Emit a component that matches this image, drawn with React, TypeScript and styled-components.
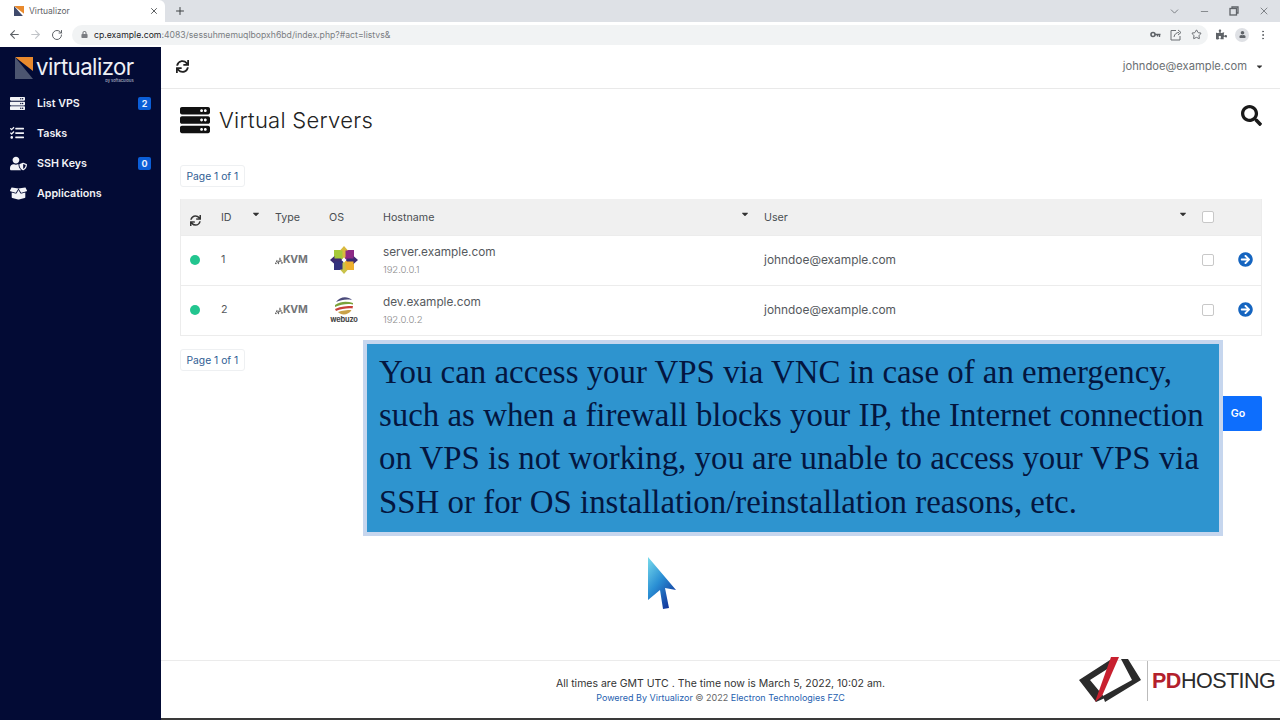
import React from "react";
import styled, { createGlobalStyle } from "styled-components";
import { FaSync, FaServer, FaSearch, FaTasks, FaUserShield, FaBoxOpen, FaArrowCircleRight, FaCaretDown, FaPuzzlePiece, FaLock, FaUser } from "react-icons/fa";
import { ArrowLeft, ArrowRight, RotateCw, Plus, X, ChevronDown, Minus, Star, EllipsisVertical } from "lucide-react";

const Global = createGlobalStyle`
  html, body { margin: 0; padding: 0; height: 720px; overflow: hidden; background: #fff; }
  body { font-family: "Inter", "Liberation Sans", sans-serif; }
  * { box-sizing: border-box; }
  #root { height: 720px; }
`;

const Page = styled.div`
  position: relative; width: 1280px; height: 720px; display: flex; flex-direction: column; overflow: hidden;
`;
const TabStrip = styled.div`
  height: 22px; background: #dee1e6; display: flex; align-items: flex-end; color: #3c4043; flex: none;
`;
const Tab = styled.div`
  width: 165px; height: 22px; background: #fff; border-radius: 0 6px 0 0; display: flex; align-items: center; padding: 0 6px 0 14px; gap: 5px;
`;
const TabTitle = styled.span`
  flex: 1; font: 400 8.5px "Inter", sans-serif; color: #5f6368;
`;
const NewTab = styled.div`
  width: 30px; height: 22px; display: flex; align-items: center; justify-content: center;
`;
const WindowControls = styled.div`
  margin-left: auto; height: 22px; display: flex; align-items: center; color: #5f6368; padding-right: 1px;
`;
const WinBtn = styled.div`
  width: 30px; height: 18px; display: flex; align-items: center; justify-content: center;
`;
const Toolbar = styled.div`
  height: 25px; background: #fff; flex: none; display: flex; align-items: center; padding: 0 0 0 4px; color: #5f6368;
`;
const NavBtn = styled.div<{ $faded?: boolean }>`
  width: 21px; display: flex; justify-content: center; color: ${p => (p.$faded ? "#c2c5c9" : "#5f6368")};
`;
const Omnibox = styled.div`
  margin-left: 5px; width: 1136px; height: 20px; background: #f1f3f4; border-radius: 10px; display: flex; align-items: center; padding: 0 6px 0 9px; gap: 6px; font: 400 8.67px "Inter", sans-serif; color: #7a7d82;
`;
const Domain = styled.span` color: #202124; `;
const UrlIcons = styled.div`
  margin-left: auto; display: flex; align-items: center; gap: 9px; color: #5f6368;
`;
const ToolIcons = styled.div`
  margin-left: 8px; display: flex; align-items: center; gap: 8px;
`;
const Avatar = styled.div`
  width: 14px; height: 14px; border-radius: 50%; background: #dfe1e5; display: flex; align-items: center; justify-content: center; color: #5f6368;
`;
const Body = styled.div`
  flex: 1; display: flex; min-height: 0;
`;
const Sidebar = styled.aside`
  width: 161px; background: #030b35; flex: none; color: #fff;
`;
const Brand = styled.div`
  height: 41px; display: flex; align-items: flex-start; padding: 9px 0 0 15px; gap: 3px;
`;
const BrandText = styled.div`
  display: flex; flex-direction: column; align-items: flex-end;
`;
const BrandName = styled.span`
  font: 400 22.2px/21px "Inter", sans-serif; letter-spacing: -0.55px; color: #eef0f5;
`;
const BrandBy = styled.span`
  font: 600 4px/5px "Inter", sans-serif; color: #9aa0b5; margin-top: 1px;
`;
const Menu = styled.nav`
  display: flex; flex-direction: column;
`;
const MenuItem = styled.div`
  height: 30px; display: flex; align-items: center; padding: 0 10px; font: 600 10.7px "Inter", sans-serif; color: #f2f3f7;
`;
const MenuIcon = styled.span`
  width: 27px; display: flex; align-items: center;
`;
const MenuBadge = styled.span`
  margin-left: auto; width: 13px; height: 13px; border-radius: 2px; background: #0b5ed7; font: 700 9px/13px "Inter", sans-serif; text-align: center; color: #e8f0ff;
`;
const Main = styled.main`
  flex: 1; display: flex; flex-direction: column; min-width: 0; border-bottom: 2px solid #3a3a3a;
`;
const TopBar = styled.header`
  height: 42px; flex: none; border-bottom: 1px solid #e9e9e9; display: flex; align-items: center; padding: 0 16px 3px 15px;
`;
const UserMenu = styled.div`
  margin-left: auto; display: flex; align-items: center; gap: 8px; font: 400 11.2px "Inter", sans-serif; color: #6b6f73;
`;
const Content = styled.div`
  flex: 1; padding: 0 18px 0 19px; display: flex; flex-direction: column;
`;
const TitleRow = styled.div`
  height: 63px; flex: none; display: flex; align-items: center; gap: 9px; color: #111; padding-bottom: 2px;
`;
const PageTitle = styled.h1`
  margin: 0; font: 300 22px "Inter", sans-serif; letter-spacing: 0.28px; color: #222;
`;
const SearchIcon = styled.span`
  margin-left: auto; display: flex; color: #1a1a1a; margin-bottom: 8px;
`;
const Pager = styled.div`
  align-self: flex-start; height: 22px; padding: 0 5.5px; border: 1px solid #eef0f2; border-radius: 3px; font: 400 10.3px/20px "Inter", sans-serif; color: #2f5d94; background: #fff;
`;
const PagerTop = styled(Pager)`
  margin-top: 13px;
`;
const Table = styled.div`
  margin-top: 12px; border: solid #ececec; border-width: 0 1px 1px 1px;
`;
const Cols = "40px 54px 54px 54px 381px 438px 36px 1fr";
const HeadRow = styled.div`
  display: grid; grid-template-columns: ${Cols}; height: 36px; background: #f0f0f0; align-items: center; font: 400 10.7px "Inter", sans-serif; color: #4a4e52;
`;
const Row = styled.div`
  display: grid; grid-template-columns: ${Cols}; height: 50px; padding-bottom: 2px; align-items: center; border-top: 1px solid #ececec; font: 400 10.7px "Inter", sans-serif; color: #55595d;
`;
const HeadCell = styled.div`
  display: flex; align-items: center; justify-content: space-between; padding-right: 14px;
`;
const SortCaret = styled.span`
  display: flex; color: #333; margin-top: -7px;
`;
const IconCell = styled.div`
  padding-left: 9px; display: flex; align-items: center; color: #333;
`;
const HeadSync = styled(IconCell)`
  padding-top: 7px;
`;
const StatusDot = styled.span`
  width: 10px; height: 10px; border-radius: 50%; background: #22c58f;
`;
const Kvm = styled.div`
  display: flex; align-items: center; font: 700 10.5px "Inter", sans-serif; color: #727477; letter-spacing: -0.2px;
`;
const KvmGlyph = styled.svg`
  margin-top: 2px;
`;
const Host = styled.div`
  display: flex; flex-direction: column; gap: 5px; font-size: 11.8px; line-height: 13px; color: #55595d; padding-top: 2px;
`;
const Ip = styled.span`
  font: 300 9.6px/12px "Inter", sans-serif; color: #888; letter-spacing: -0.1px;
`;
const Email = styled.div`
  font-size: 11.9px; color: #55595d;
`;
const Check = styled.span`
  width: 12px; height: 12px; border: 1px solid #c8c8c8; border-radius: 2px; background: #fff; display: block;
`;
const Arrow = styled.div`
  display: flex; color: #1565c0;
`;
const OsBox = styled.div`
  width: 30px; display: flex; flex-direction: column; align-items: center;
`;
const WebuzoLabel = styled.span`
  font: 700 7.4px/8px "Inter", sans-serif; color: #444; letter-spacing: -0.2px;
`;
const PagerBottom = styled(Pager)`
  margin-top: 13px;
`;
const ActionRow = styled.div`
  display: flex; justify-content: flex-end; margin-top: 25px;
`;
const GoButton = styled.button`
  width: 48px; height: 35px; border: 0; border-radius: 2px; background: #0d6efd; color: #fff; font: 600 10.7px "Inter", sans-serif;
`;
const Footer = styled.footer`
  margin-top: auto; height: 58px; flex: none; border-top: 1px solid #ebebeb; display: flex; flex-direction: column; align-items: center; padding-top: 16px; gap: 1px;
`;
const FootLine = styled.div`
  font: 400 10.5px/14px "Inter", sans-serif; color: #333;
`;
const FootLinks = styled.div`
  font: 400 9px/11px "Inter", sans-serif; color: #666;
`;
const FootLink = styled.span` color: #1f5fb0; `;
const Caption = styled.div`
  position: absolute; left: 363px; top: 340px; width: 860px; height: 196px; background: #2e94cf; border: 4px solid #c6d6ee; padding: 7px 0 0 12px; font: 400 32.9px/43.2px "Liberation Serif", serif; color: #04163f; white-space: pre;
`;
const CursorMark = styled.svg`
  position: absolute; left: 646px; top: 555px;
`;
const PdLogo = styled.div`
  position: absolute; left: 1078px; top: 656px; display: flex; align-items: center;
`;
const PdDivider = styled.span`
  width: 1px; height: 40px; background: #bbb; margin: 0 4px 0 5px;
`;
const PdText = styled.span`
  font: 400 21.5px "Liberation Sans", sans-serif; letter-spacing: -0.5px; color: #2b2b2b;
`;
const PdRed = styled.b`
  color: #b3202c; font-weight: 700;
`;

const BrandMark = () => (
  <svg width="18" height="23" viewBox="0 0 18 23">
    <polygon points="0,1 18,1 18,15" fill="#e98a2d" />
    <polygon points="0,1 18,23 0,23" fill="#4c5570" />
  </svg>
);
const TabIcon = () => (
  <svg width="10" height="10" viewBox="0 0 18 18">
    <polygon points="0,0 18,0 18,14" fill="#e98a2d" />
    <polygon points="0,0 16,18 0,18" fill="#3f4a6b" />
  </svg>
);
const KeyIcon = () => (
  <svg width="11" height="7" viewBox="0 0 11 7" fill="none" stroke="#5f6368">
    <circle cx="3" cy="3.5" r="2" strokeWidth="1.6" />
    <path d="M5 3.5 H10.5 M9.5 3.5 V6 M7.5 3.5 V5.5" strokeWidth="1.3" />
  </svg>
);
const ShareIcon = () => (
  <svg width="12" height="12" viewBox="0 0 12 12" fill="none" stroke="#6b6f73" strokeWidth="1">
    <path d="M6 1.5 H1 V11 H10 V7" />
    <path d="M4 8 C4.5 5 6.5 3.5 9 3.5 M8 1 L11 3.5 L8 6" />
  </svg>
);
const KvmMark = () => (
  <KvmGlyph width="8" height="9" viewBox="0 0 8 9">
    <path d="M0.5 8 L2 5 L3.5 7 L5 3 L7.5 8" fill="none" stroke="#555" strokeWidth="1.4" strokeDasharray="1.5 .8" />
  </KvmGlyph>
);
const CentOs = () => (
  <svg width="28" height="28" viewBox="0 0 28 28">
    <rect x="4" y="4" width="9.5" height="9.5" fill="#a6c93a" />
    <rect x="14.5" y="4" width="9.5" height="9.5" fill="#8d2a86" />
    <rect x="4" y="14.5" width="9.5" height="9.5" fill="#33307e" />
    <rect x="14.5" y="14.5" width="9.5" height="9.5" fill="#eeb02e" />
    <path d="M14 0 L18 4.5 L15.5 4.5 L15.5 11 L14 12.5 L12.5 11 L12.5 4.5 L10 4.5Z" fill="#d9b93e" />
    <path d="M28 14 L23.5 18 L23.5 15.5 L17 15.5 L15.5 14 L17 12.5 L23.5 12.5 L23.5 10Z" fill="#3c2a72" />
    <path d="M14 28 L10 23.5 L12.5 23.5 L12.5 17 L14 15.5 L15.5 17 L15.5 23.5 L18 23.5Z" fill="#c9c24a" />
    <path d="M0 14 L4.5 10 L4.5 12.5 L11 12.5 L12.5 14 L11 15.5 L4.5 15.5 L4.5 18Z" fill="#3c2a72" />
    <path d="M14 11.5 L16.5 14 L14 16.5 L11.5 14Z" fill="#fff" />
  </svg>
);
const Webuzo = () => (
  <svg width="20" height="20" viewBox="0 0 20 20">
    <path d="M2 6 C6 0 14 0 18 4 C12 3 7 4 2 6Z" fill="#4a4a7a" />
    <path d="M1 9 C7 5 13 5 19 7 L19 8.5 C13 7.5 7 8.5 1 11Z" fill="#7aa23a" />
    <path d="M1 13 C7 10 13 10 19 10 L18.5 12.5 C13 12 7 13 2 15Z" fill="#c8413a" />
    <path d="M4 16 C8 14.5 13 14 17.5 14 C15 19 7 20 4 16Z" fill="#c9a24a" />
  </svg>
);

const Cursor = () => (
  <CursorMark width="32" height="58" viewBox="0 0 32 58">
    <defs>
      <linearGradient id="curs" x1="0" y1="0" x2="0.7" y2="1">
        <stop offset="0" stopColor="#7adcec" />
        <stop offset="0.5" stopColor="#2a8fd4" />
        <stop offset="1" stopColor="#12349a" />
      </linearGradient>
    </defs>
    <path d="M2 2 L2 45 L14 35 L17 54 L23 53 L19 33 L30 35 Z" fill="url(#curs)" />
  </CursorMark>
);

const PdMark = () => (
  <svg width="64" height="50" viewBox="0 0 64 50">
    <path d="M1 24 L32 4 L34 10 L12 24 L27 42 L18 46 Z" fill="#2b2b2b" />
    <path d="M43 3 L50 3 L63 24 L27 46 L25 40 L54 24 Z" fill="#2b2b2b" />
    <path d="M33 1 L41 1 L24 40 L17 46 Z" fill="#c8202f" />
  </svg>
);

function VpsRow({ id, host, ip, os }: { id: number; host: string; ip: string; os: React.ReactNode }) {
  return (
    <Row>
      <IconCell><StatusDot /></IconCell>
      <div>{id}</div>
      <Kvm><KvmMark />KVM</Kvm>
      <OsBox>{os}</OsBox>
      <Host>{host}<Ip>{ip}</Ip></Host>
      <Email>johndoe@example.com</Email>
      <Check />
      <Arrow><FaArrowCircleRight size={15} /></Arrow>
    </Row>
  );
}

export default function App() {
  return (
    <Page>
      <Global />
      <TabStrip>
        <Tab>
          <TabIcon />
          <TabTitle>Virtualizor</TabTitle>
          <X size={10} strokeWidth={2} />
        </Tab>
        <NewTab><Plus size={12} strokeWidth={2} /></NewTab>
        <WindowControls>
          <WinBtn><ChevronDown size={13} strokeWidth={1.4} /></WinBtn>
          <WinBtn><Minus size={11} strokeWidth={1.5} /></WinBtn>
          <WinBtn>
            <svg width="10" height="10" viewBox="0 0 10 10" fill="none" stroke="#5f6368" strokeWidth="1.3">
              <rect x="1" y="2.5" width="6.5" height="6.5" />
              <path d="M3 2.5 V1 H9 V7 H7.5" />
            </svg>
          </WinBtn>
          <WinBtn><X size={12} strokeWidth={1.5} /></WinBtn>
        </WindowControls>
      </TabStrip>
      <Toolbar>
        <NavBtn><ArrowLeft size={13} strokeWidth={2} /></NavBtn>
        <NavBtn $faded><ArrowRight size={13} strokeWidth={2} /></NavBtn>
        <NavBtn><RotateCw size={12} strokeWidth={2} /></NavBtn>
        <Omnibox>
          <FaLock size={7} />
          <span><Domain>cp.example.com</Domain>:4083/sessuhmemuqlbopxh6bd/index.php?#act=listvs&amp;</span>
          <UrlIcons>
            <KeyIcon />
            <ShareIcon />
            <Star size={11} strokeWidth={2} />
          </UrlIcons>
        </Omnibox>
        <ToolIcons>
          <FaPuzzlePiece size={11} />
          <Avatar><FaUser size={7} /></Avatar>
          <EllipsisVertical size={12} />
        </ToolIcons>
      </Toolbar>
      <Body>
        <Sidebar>
          <Brand>
            <BrandMark />
            <BrandText>
              <BrandName>virtualizor</BrandName>
              <BrandBy>by softaculous</BrandBy>
            </BrandText>
          </Brand>
          <Menu>
            <MenuItem><MenuIcon><FaServer size={15} /></MenuIcon>List VPS<MenuBadge>2</MenuBadge></MenuItem>
            <MenuItem><MenuIcon><FaTasks size={14} /></MenuIcon>Tasks</MenuItem>
            <MenuItem><MenuIcon><FaUserShield size={17} /></MenuIcon>SSH Keys<MenuBadge>0</MenuBadge></MenuItem>
            <MenuItem><MenuIcon><FaBoxOpen size={17} /></MenuIcon>Applications</MenuItem>
          </Menu>
        </Sidebar>
        <Main>
          <TopBar>
            <FaSync size={13} color="#222" />
            <UserMenu>johndoe@example.com <FaCaretDown size={9} color="#333" /></UserMenu>
          </TopBar>
          <Content>
            <TitleRow>
              <FaServer size={30} />
              <PageTitle>Virtual Servers</PageTitle>
              <SearchIcon><FaSearch size={21} /></SearchIcon>
            </TitleRow>
            <PagerTop>Page 1 of 1</PagerTop>
            <Table>
              <HeadRow>
                <HeadSync><FaSync size={11} /></HeadSync>
                <HeadCell>ID<SortCaret><FaCaretDown size={10} /></SortCaret></HeadCell>
                <HeadCell>Type</HeadCell>
                <HeadCell>OS</HeadCell>
                <HeadCell>Hostname<SortCaret><FaCaretDown size={10} /></SortCaret></HeadCell>
                <HeadCell>User<SortCaret><FaCaretDown size={10} /></SortCaret></HeadCell>
                <Check />
                <span />
              </HeadRow>
              <VpsRow id={1} host="server.example.com" ip="192.0.0.1" os={<CentOs />} />
              <VpsRow id={2} host="dev.example.com" ip="192.0.0.2" os={<><Webuzo /><WebuzoLabel>webuzo</WebuzoLabel></>} />
            </Table>
            <PagerBottom>Page 1 of 1</PagerBottom>
            <ActionRow><GoButton>Go</GoButton></ActionRow>
          </Content>
          <Footer>
            <FootLine>All times are GMT UTC . The time now is March 5, 2022, 10:02 am.</FootLine>
            <FootLinks><FootLink>Powered By Virtualizor</FootLink> © 2022 <FootLink>Electron Technologies FZC</FootLink></FootLinks>
          </Footer>
        </Main>
      </Body>
      <Caption>{`You can access your VPS via VNC in case of an emergency,
such as when a firewall blocks your IP, the Internet connection
on VPS is not working, you are unable to access your VPS via
SSH or for OS installation/reinstallation reasons, etc.`}</Caption>
      <Cursor />
      <PdLogo>
        <PdMark />
        <PdDivider />
        <PdText><PdRed>PD</PdRed>HOSTING</PdText>
      </PdLogo>
    </Page>
  );
}
